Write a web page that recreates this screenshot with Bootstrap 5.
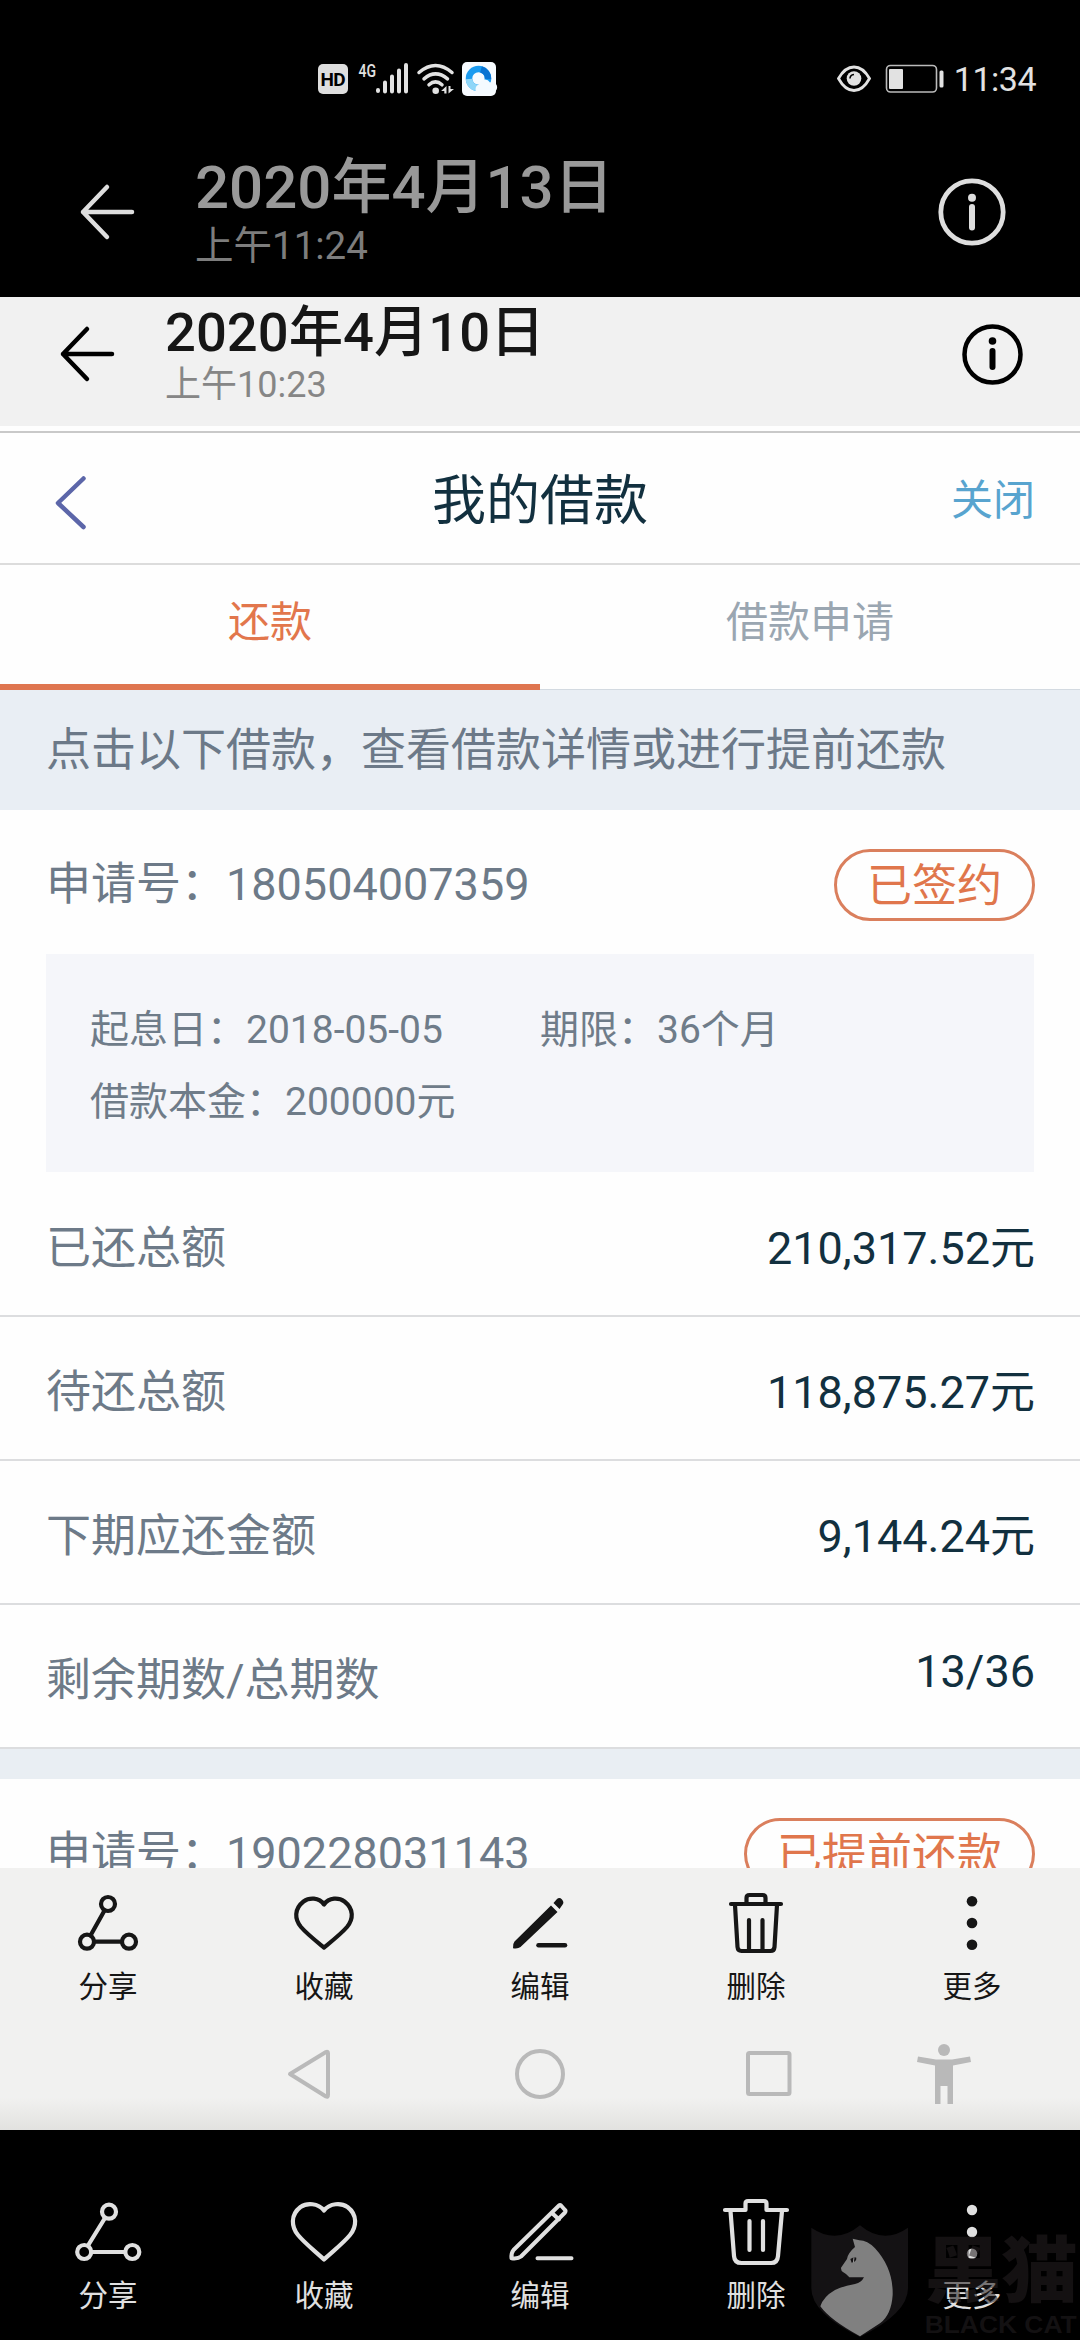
<!DOCTYPE html>
<html lang="zh-CN">
<head>
<meta charset="utf-8">
<meta name="viewport" content="width=device-width, initial-scale=1">
<title>我的借款</title>
<link rel="stylesheet" href="https://cdn.jsdelivr.net/npm/bootstrap@5.3.0/dist/css/bootstrap.min.css">
<style>
  body { font-family: Roboto, "Noto Sans CJK SC", sans-serif; background: #000; width: 1080px; height: 2340px; overflow: hidden; }
  svg { display: block; flex: none; overflow: visible; }
  .line-ico { fill: none; stroke: currentColor; stroke-linecap: round; stroke-linejoin: round; }
  .screen { width: 1080px; height: 2340px; overflow: hidden; }
  .status { height: 127px; padding: 31px 44px 0 318px; color: #e2e2e2; }
  .clock { font-size: 34px; line-height: 34px; margin-left: 10px; letter-spacing: -.5px; }
  .photo-top { height: 170px; padding: 0 74px 0 80px; color: #dedede; }
  .photo-top .stamp { margin-left: 59px; color: #999; }
  .stamp-day { font-size: 60px; line-height: 60px; font-weight: 500; }
  .stamp-time { font-size: 38.5px; line-height: 40px; margin-top: 8px; color: #7d7d7d; }
  .inner-top { height: 129px; padding: 0 57px 15px 60px; background: #f1f1f1; color: #000; }
  .inner-top .stamp { margin-left: 49px; padding-top: 3px; color: #161616; }
  .inner-top .stamp-day { font-size: 54.4px; line-height: 54px; }
  .inner-top .stamp-time { font-size: 36px; margin-top: 5px; color: #868686; }
  .page { background: #fefefe; }
  .page-gap { height: 5px; }
  .page-nav-wrap { border-top: 2px solid #c9c9c9; }
  .page-nav { height: 132px; padding: 8px 45px 0 55px; border-bottom: 2px solid #dcdcdc; }
  .page-title { font-size: 54px; line-height: 54px; color: #12303f; }
  .side-start { width: 74px; }
  .side-end { width: 84px; }
  .close-link { font-size: 42px; line-height: 42px; color: #58a4cf; padding-bottom: 2px; }
  .tab { height: 125px; font-size: 42px; line-height: 42px; color: #9aa6b1; padding-bottom: 9px; border-bottom: 1px solid #d3dae1; }
  .tab-on { color: #e2764c; border-bottom: 6px solid #df7550; padding-bottom: 4px; }
  .tip { height: 120px; background: #e9eef4; color: #6c7988; font-size: 45px; line-height: 45px; padding: 0 46px; }
  .loan-head, .loan-row { height: 144px; padding: 5px 45px 0 46px; font-size: 45px; line-height: 45px; color: #6d7a88; }
  .loan-row { padding-top: 8px; border-bottom: 2px solid #dcdddf; }
  .loan-row .amount { color: #12303f; }
  .raised { padding-bottom: 18px; }
  .pill { height: 72px; border: 3px solid #da7f5d; border-radius: 36px; padding: 4px 30px 0; color: #e0764c; display: flex; align-items: center; }
  .facts { height: 218px; margin: 0 46px 1px; padding: 40px 44px 0; background: #f5f6fa; font-size: 39px; line-height: 72px; color: #6f7c89; }
  .fact-a { width: 450px; }
  .divider { height: 30px; background: #e9eef3; }
  .cut { height: 89px; overflow: hidden; }
  .tools { height: 174px; padding-top: 23px; background: #f1f1f0; color: #161616; }
  .tool { width: 216px; font-size: 29.5px; line-height: 30px; gap: 17px; }
  .sys { height: 88px; padding-left: 277px; background: linear-gradient(#f1f1f0 0 56px, #e2e2e0 100%); color: #b9b9b9; }
  .nav-home { margin-left: 167px; }
  .nav-recent { margin-left: 165px; }
  .nav-access { margin-left: 111px; }
  .tools-dark { height: 210px; padding-top: 66px; background: #000; color: #e0e0e0; }
  .tools-dark .tool { gap: 13px; }
  .brand { right: 0; bottom: 0; }
  .chev { color: #5c66a9; }
</style>
</head>
<body>
<div class="screen position-relative d-flex flex-column">

  <div class="status d-flex align-items-center">
    <svg width="180" height="36" viewBox="0 0 180 36">
      <rect x="0" y="3" width="30" height="30" rx="5" fill="#dedede"/>
      <text x="15" y="24.500" text-anchor="middle" font-family="Roboto" font-weight="700" font-size="19" textLength="25" fill="#000">HD</text>
      <text x="40.500" y="15.500" font-family="Roboto" font-weight="500" font-size="19" textLength="17.500" lengthAdjust="spacingAndGlyphs" fill="#e2e2e2">4G</text>
      <g stroke="#e2e2e2" stroke-width="4" stroke-linecap="round">
        <path d="M60 29v1M67 21.500v9M74 15.500v15M81 9.500v21M88 4v26.500"/>
      </g>
      <g fill="none" stroke="#e2e2e2" stroke-width="3.500" stroke-linecap="round">
        <path d="M101 11.500Q117.500-2.500 134 11.500M106 17.800Q117.500 8 129.500 17.800M111 23.800Q117.500 18 124 23.800"/>
      </g>
      <circle cx="117.700" cy="29.700" r="3.300" fill="#e2e2e2"/>
      <path d="M128.500 25v7.500h-2.200V30h-3.200zM130.500 25h2v3h3.500l-5.500 4.500z" fill="#e2e2e2"/>
      <rect x="144" y="1" width="34" height="34" rx="5" fill="#f7fbff"/>
      <circle cx="160.500" cy="17.500" r="9.500" fill="none" stroke="#1b9bf0" stroke-width="6.500"/>
      <path d="M163 8.300A9.500 9.500 0 0 1 170 18" fill="none" stroke="#0a74d2" stroke-width="6.500"/>
      <path d="M151 18A9.500 9.500 0 0 0 161 27" fill="none" stroke="#8fd6f8" stroke-width="6.500"/>
      <path d="M161 33a5 5 0 0 1 0-9.500 6 6 0 0 1 11-2 5 5 0 0 1 4 9.500q-7 3-15 2z" fill="#f4faff"/>
    </svg>
    <div class="ms-auto d-flex align-items-center">
      <svg width="108" height="36" viewBox="0 0 108 36">
        <path d="M2.500 17.500Q9 6 18 6t15.500 11.500Q27 29.500 18 29.500T2.500 17.500z" fill="none" stroke="#e2e2e2" stroke-width="2.800"/>
        <circle cx="18" cy="17.500" r="7.300" fill="#e2e2e2"/>
        <path d="M14 17.500q0-3.500 4-4" fill="none" stroke="#000" stroke-width="1.600"/>
        <rect x="50.500" y="4.500" width="50" height="26.500" rx="4" fill="none" stroke="#bbb" stroke-width="1.600"/>
        <rect x="53" y="8" width="14" height="20" rx="1" fill="#e2e2e2"/>
        <rect x="103.500" y="9.500" width="4" height="17" rx="1.500" fill="#e2e2e2"/>
      </svg>
      <span class="clock">11:34</span>
    </div>
  </div>

  <div class="photo-top d-flex align-items-center">
    <svg class="line-ico" width="56" height="60" viewBox="0 0 56 60" stroke-width="4.500"><path d="M3 30H52M27 5 3 30l24 25"/></svg>
    <div class="stamp">
      <div class="stamp-day">2020年4月13日</div>
      <div class="stamp-time">上午11:24</div>
    </div>
    <svg class="line-ico ms-auto" width="68" height="68" viewBox="0 0 68 68" stroke-width="4.800"><circle cx="34" cy="34" r="31.200"/><path d="M34 29V49.500" stroke-width="6"/><circle cx="34" cy="19.800" r="4" fill="currentColor" stroke="none"/></svg>
  </div>

  <div class="inner-top d-flex align-items-center">
    <svg class="line-ico" width="56" height="60" viewBox="0 0 56 60" stroke-width="4.500"><path d="M3 30H52M27 5 3 30l24 25"/></svg>
    <div class="stamp">
      <div class="stamp-day">2020年4月10日</div>
      <div class="stamp-time">上午10:23</div>
    </div>
    <svg class="line-ico ms-auto" width="61" height="61" viewBox="0 0 61 61" stroke-width="4.500"><circle cx="30.500" cy="30.500" r="28"/><path d="M30.500 27V43" stroke-width="6"/><circle cx="30.500" cy="17" r="3.800" fill="currentColor" stroke="none"/></svg>
  </div>

  <main class="page">
    <div class="page-gap"></div>
    <div class="page-nav-wrap">
      <div class="page-nav d-flex align-items-center justify-content-between">
        <div class="side-start"><svg class="line-ico chev" width="32" height="54" viewBox="0 0 32 54" stroke-width="4.500"><path d="M28.500 3.500 3 28 28.500 52"/></svg></div>
        <div class="page-title">我的借款</div>
        <div class="side-end close-link text-end">关闭</div>
      </div>
    </div>
    <div class="d-flex text-center">
      <div class="tab tab-on w-50 d-flex align-items-center justify-content-center">还款</div>
      <div class="tab w-50 d-flex align-items-center justify-content-center">借款申请</div>
    </div>
    <div class="tip d-flex align-items-center">点击以下借款，查看借款详情或进行提前还款</div>

    <section>
      <div class="loan-head d-flex align-items-center justify-content-between">
        <span>申请号：180504007359</span>
        <span class="pill">已签约</span>
      </div>
      <div class="facts">
        <div class="d-flex"><div class="fact-a">起息日：2018-05-05</div><div>期限：36个月</div></div>
        <div>借款本金：200000元</div>
      </div>
      <div class="loan-row d-flex align-items-center justify-content-between"><span>已还总额</span><span class="amount">210,317.52元</span></div>
      <div class="loan-row d-flex align-items-center justify-content-between"><span>待还总额</span><span class="amount">118,875.27元</span></div>
      <div class="loan-row d-flex align-items-center justify-content-between"><span>下期应还金额</span><span class="amount">9,144.24元</span></div>
      <div class="loan-row d-flex align-items-center justify-content-between"><span>剩余期数/总期数</span><span class="amount raised">13/36</span></div>
    </section>
    <div class="divider"></div>
    <section class="cut">
      <div class="loan-head d-flex align-items-center justify-content-between">
        <span>申请号：190228031143</span>
        <span class="pill">已提前还款</span>
      </div>
    </section>
  </main>

  <div class="tools d-flex">
    <div class="tool d-flex flex-column align-items-center">
      <svg class="line-ico" width="64" height="64" viewBox="0 0 64 64" stroke-width="4.200"><circle cx="32" cy="13" r="7"/><circle cx="11" cy="50.700" r="7"/><circle cx="53" cy="50.700" r="7"/><path d="M28.500 19.500 14.500 44.500M18 50.700H46"/></svg>
      <span>分享</span>
    </div>
    <div class="tool d-flex flex-column align-items-center">
      <svg class="line-ico" width="64" height="64" viewBox="0 0 64 64" stroke-width="4.200"><path d="M32 13.500C27 6 17 6.500 11.500 10.500 2 18 2.500 28 9 36 15 43 24 50 32 56.500 40 50 49 43 55 36 61.500 28 62 18 52.500 10.500 47 6.500 37 6 32 13.500z"/></svg>
      <span>收藏</span>
    </div>
    <div class="tool d-flex flex-column align-items-center">
      <svg width="64" height="64" viewBox="0 0 64 64"><path d="M43 14.500 49.500 21 12.500 56Q10 58 5 57.200 4.500 53 6.500 50.500zM45.500 12 49 8Q51.500 5.800 54 8.500 56.500 11.500 54.500 13.800L51.500 18z" fill="currentColor"/><path d="M30.500 54.200H57" stroke="currentColor" stroke-width="4.500" stroke-linecap="round"/></svg>
      <span>编辑</span>
    </div>
    <div class="tool d-flex flex-column align-items-center">
      <svg class="line-ico" width="64" height="64" viewBox="0 0 64 64" stroke-width="4.200"><path d="M7 13H57M22.500 12V7Q22.500 4 25.500 4H38.500Q41.500 4 41.500 7V12M11 14 13.500 56Q13.800 60 17.500 60H46.500Q50.200 60 50.500 56L53 14M25 29V59M38.500 29V59"/></svg>
      <span>删除</span>
    </div>
    <div class="tool d-flex flex-column align-items-center">
      <svg width="64" height="64" viewBox="0 0 64 64" fill="currentColor"><circle cx="32" cy="10.300" r="5.300"/><circle cx="32" cy="32" r="5.300"/><circle cx="32" cy="53.700" r="5.300"/></svg>
      <span>更多</span>
    </div>
  </div>
  <div class="sys d-flex">
    <svg class="line-ico" width="64" height="64" viewBox="0 0 64 64" stroke-width="4"><path d="M13 32 49 10Q51 9 51 11.500V52.500Q51 55.500 49 54.500z"/></svg>
    <svg class="line-ico nav-home" width="64" height="64" viewBox="0 0 64 64" stroke-width="4"><circle cx="32" cy="32" r="23"/></svg>
    <svg class="line-ico nav-recent" width="64" height="64" viewBox="0 0 64 64" stroke-width="4"><rect x="11" y="11" width="41.500" height="41" rx="1.500"/></svg>
    <svg class="nav-access" width="64" height="64" viewBox="0 0 64 64" fill="currentColor"><circle cx="32" cy="8" r="6"/><path d="M6 14.500 24 17.500H40L58 14.500 59 20 41 23.500V62H35.500V44H28.500V62H23V23.500L5 20z"/></svg>
  </div>

  <div class="tools-dark d-flex">
    <div class="tool d-flex flex-column align-items-center">
      <svg class="line-ico" width="72" height="72" viewBox="0 0 72 72" stroke-width="4.200"><circle cx="37" cy="15.700" r="7"/><circle cx="12.200" cy="56" r="7"/><circle cx="60.300" cy="56" r="7"/><path d="M33 22 16 49.500M19.500 56H53"/></svg>
      <span>分享</span>
    </div>
    <div class="tool d-flex flex-column align-items-center">
      <svg class="line-ico" width="72" height="72" viewBox="0 0 72 72" stroke-width="4.200"><path d="M36 14.500C30 7 19 6.500 12.500 11 2 19 3.500 31 10 39 17 47.500 27 55 36 63.500 45 55 55 47.500 62 39 68.500 31 70 19 59.500 11 53 6.500 42 7 36 14.500z"/></svg>
      <span>收藏</span>
    </div>
    <div class="tool d-flex flex-column align-items-center">
      <svg class="line-ico" width="72" height="72" viewBox="0 0 72 72" stroke-width="4"><path d="M55 9.500Q56 8.500 57 9.500L61 14Q62 15 61 16.500L17 60.500Q14 63 7.500 62.200 7 57 9.500 54zM48 17 55 23.500M33.500 62.200H67.500"/></svg>
      <span>编辑</span>
    </div>
    <div class="tool d-flex flex-column align-items-center">
      <svg class="line-ico" width="72" height="72" viewBox="0 0 72 72" stroke-width="4.200"><path d="M5 14H25.500V7.500Q25.500 5 28 5H44Q46.500 5 46.500 7.500V14H67M10.500 15 14 60Q14.500 67 21.500 67H51Q57.500 67 58 60L62 15M29.500 25V54M43 25V54"/></svg>
      <span>删除</span>
    </div>
    <div class="tool d-flex flex-column align-items-center">
      <svg width="72" height="72" viewBox="0 0 72 72" fill="currentColor"><circle cx="36" cy="14" r="5.200"/><circle cx="36" cy="36" r="5.200"/><circle cx="36" cy="57.700" r="5.200"/></svg>
      <span>更多</span>
    </div>
  </div>

  <svg class="brand position-absolute" width="300" height="140" viewBox="0 0 900 420">
    <path d="M94 83Q170 135 240 76 310 135 384 83V265Q384 340 240 411 94 340 94 265z" fill="#141214"/>
    <path d="M218 116 238 121Q262 121 285 145 340 205 338 285 334 345 300 370L240 409Q150 360 121 319 130 290 165 270 190 258 225 252 245 247 252 232H208Q200 222 190 217 182 212 183 203L201 177Q203 160 225 141z" fill="#808080"/>
    <path d="M211 177Q222 170 229 173 230 185 215 188z" fill="#141214"/><path d="M222 172 220 188" stroke="#999" stroke-width="3"/>
    <g fill="#231f20" fill-opacity=".56">
      <text x="434" y="287" font-family="Noto Sans CJK SC" font-weight="900" font-size="214" textLength="460" lengthAdjust="spacingAndGlyphs">黑猫</text>
      <text x="434" y="398" font-family="Liberation Sans" font-weight="700" font-size="70" textLength="456" lengthAdjust="spacingAndGlyphs">BLACK CAT</text>
    </g>
  </svg>
</div>
<script src="https://cdn.jsdelivr.net/npm/bootstrap@5.3.0/dist/js/bootstrap.bundle.min.js"></script>
</body>
</html>
